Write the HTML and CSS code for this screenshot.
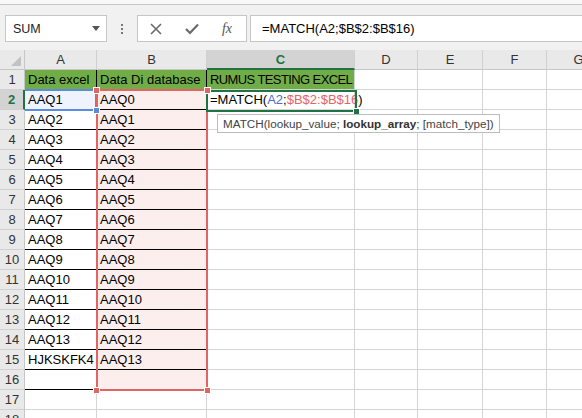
FILE: index.html
```html
<!DOCTYPE html>
<html>
<head>
<meta charset="utf-8">
<link rel="stylesheet" href="styles.css">
</head>
<body>
<div class="app">
  <div class="titlebar"></div>
  <div class="toolbar">
    <div class="namebox"><span class="nb-text">SUM</span><span class="nb-arrow"></span></div>
    <div class="dots"><span></span><span></span><span></span></div>
    <div class="fbuttons">
      <svg class="ic" width="14" height="14" viewBox="0 0 14 14"><path d="M2 2 L12 12 M12 2 L2 12" stroke="#6a6a6a" stroke-width="1.6" fill="none"/></svg>
      <svg class="ic" width="16" height="14" viewBox="0 0 16 14"><path d="M2 7 L6 11 L14 2.5" stroke="#6a6a6a" stroke-width="2.2" fill="none"/></svg>
      <span class="fx">fx</span>
    </div>
    <div class="finput">=MATCH(A2;$B$2:$B$16)</div>
  </div>
  <div class="sheet">
    <div class="corner"><span class="tri"></span></div>
    <div class="ch">A</div><div class="ch">B</div><div class="ch sel">C</div><div class="ch">D</div><div class="ch">E</div><div class="ch">F</div><div class="ch">G</div>

    <div class="rh">1</div><div class="c hd bkr">Data excel</div><div class="c hd bkr">Data Di database</div><div class="c hd tight">RUMUS TESTING EXCEL</div><div class="c"></div><div class="c"></div><div class="c"></div><div class="c"></div>

    <div class="rh sel">2</div><div class="c blue">AAQ1</div><div class="c red bk">AAQ0</div><div class="c formula">=MATCH(<span class="rb">A2</span>;<span class="rr">$B$2:$B$16</span>)</div><div class="c"></div><div class="c"></div><div class="c"></div><div class="c"></div>

    <div class="rh">3</div><div class="c bk">AAQ2</div><div class="c red bk">AAQ1</div><div class="c"></div><div class="c"></div><div class="c"></div><div class="c"></div><div class="c"></div>
    <div class="rh">4</div><div class="c bk">AAQ3</div><div class="c red bk">AAQ2</div><div class="c"></div><div class="c"></div><div class="c"></div><div class="c"></div><div class="c"></div>
    <div class="rh">5</div><div class="c bk">AAQ4</div><div class="c red bk">AAQ3</div><div class="c"></div><div class="c"></div><div class="c"></div><div class="c"></div><div class="c"></div>
    <div class="rh">6</div><div class="c bk">AAQ5</div><div class="c red bk">AAQ4</div><div class="c"></div><div class="c"></div><div class="c"></div><div class="c"></div><div class="c"></div>
    <div class="rh">7</div><div class="c bk">AAQ6</div><div class="c red bk">AAQ5</div><div class="c"></div><div class="c"></div><div class="c"></div><div class="c"></div><div class="c"></div>
    <div class="rh">8</div><div class="c bk">AAQ7</div><div class="c red bk">AAQ6</div><div class="c"></div><div class="c"></div><div class="c"></div><div class="c"></div><div class="c"></div>
    <div class="rh">9</div><div class="c bk">AAQ8</div><div class="c red bk">AAQ7</div><div class="c"></div><div class="c"></div><div class="c"></div><div class="c"></div><div class="c"></div>
    <div class="rh">10</div><div class="c bk">AAQ9</div><div class="c red bk">AAQ8</div><div class="c"></div><div class="c"></div><div class="c"></div><div class="c"></div><div class="c"></div>
    <div class="rh">11</div><div class="c bk">AAQ10</div><div class="c red bk">AAQ9</div><div class="c"></div><div class="c"></div><div class="c"></div><div class="c"></div><div class="c"></div>
    <div class="rh">12</div><div class="c bk">AAQ11</div><div class="c red bk">AAQ10</div><div class="c"></div><div class="c"></div><div class="c"></div><div class="c"></div><div class="c"></div>
    <div class="rh">13</div><div class="c bk">AAQ12</div><div class="c red bk">AAQ11</div><div class="c"></div><div class="c"></div><div class="c"></div><div class="c"></div><div class="c"></div>
    <div class="rh">14</div><div class="c bk">AAQ13</div><div class="c red bk">AAQ12</div><div class="c"></div><div class="c"></div><div class="c"></div><div class="c"></div><div class="c"></div>
    <div class="rh">15</div><div class="c bk">HJKSKFK4</div><div class="c red bk">AAQ13</div><div class="c"></div><div class="c"></div><div class="c"></div><div class="c"></div><div class="c"></div>
    <div class="rh">16</div><div class="c bk"></div><div class="c red"></div><div class="c"></div><div class="c"></div><div class="c"></div><div class="c"></div><div class="c"></div>
    <div class="rh">17</div><div class="c"></div><div class="c"></div><div class="c"></div><div class="c"></div><div class="c"></div><div class="c"></div><div class="c"></div>
    <div class="rh">18</div><div class="c"></div><div class="c"></div><div class="c"></div><div class="c"></div><div class="c"></div><div class="c"></div><div class="c"></div>

    <div class="range-blue"></div>
    <div class="range-red"></div>
    <div class="active"></div>
    <span class="h h-red h1"></span>
    <span class="h h-red h2"></span>
    <span class="h h-red h3"></span>
    <span class="h h-red h4"></span>
    <span class="h h-blue h5"></span>
    <span class="h h-green h6"></span>
    <div class="tip">MATCH(lookup_value; <b>lookup_array</b>; [match_type])</div>
  </div>
</div>
</body>
</html>
```
FILE: styles.css
```css
* { box-sizing: border-box; }
html, body { margin: 0; padding: 0; }
body {
  width: 582px;
  height: 418px;
  overflow: hidden;
  background: #ffffff;
  font-family: "Liberation Sans", Arial, sans-serif;
}
.app { width: 582px; height: 418px; overflow: hidden; }
.titlebar {
  height: 5px;
  background: #f8f8f8;
  border-bottom: 1px solid #c8c8c8;
}
.toolbar {
  height: 45px;
  background: #f1f1f1;
  display: flex;
  align-items: flex-start;
  padding-top: 10px;
  padding-left: 5px;
}
.namebox {
  width: 102px;
  height: 27px;
  background: #fff;
  border: 1px solid #c6c6c6;
  display: flex;
  align-items: center;
  justify-content: space-between;
  padding: 0 6px 0 7px;
  font-size: 12.5px;
  color: #222;
}
.nb-arrow {
  width: 0; height: 0;
  border-left: 4px solid transparent;
  border-right: 4px solid transparent;
  border-top: 5px solid #555;
}
.dots {
  width: 30px;
  height: 27px;
  display: flex;
  flex-direction: column;
  align-items: center;
  justify-content: center;
  gap: 2px;
}
.dots span { width: 2px; height: 2px; background: #777; }
.fbuttons {
  width: 110px;
  height: 27px;
  background: #fff;
  border: 1px solid #c6c6c6;
  display: flex;
  align-items: center;
  justify-content: space-between;
  padding: 0 14px 0 11px;
}
.ic { display: block; }
.fx {
  font-family: "Liberation Serif", serif;
  font-style: italic;
  font-size: 14px;
  color: #555;
}
.finput {
  flex: 1;
  height: 27px;
  margin-left: 3px;
  background: #fff;
  border: 1px solid #c6c6c6;
  border-right: none;
  padding-left: 11px;
  font-size: 13px;
  line-height: 25px;
  color: #000;
}
.sheet {
  position: relative;
  display: grid;
  grid-template-columns: 25px 72px 110px 148px 63px 65px 64px 64px;
  grid-auto-rows: 20px;
  font-size: 13px;
}
.corner {
  background: #e9e9e9;
  border-right: 1px solid #c6c6c6;
  border-bottom: 1px solid #c6c6c6;
  position: relative;
}
.tri {
  position: absolute;
  right: 3px; bottom: 3px;
  width: 0; height: 0;
  border-left: 10px solid transparent;
  border-bottom: 10px solid #c2c2c2;
}
.ch {
  background: #e9e9e9;
  border-right: 1px solid #d0d0d0;
  border-bottom: 1px solid #c6c6c6;
  text-align: center;
  line-height: 19px;
  color: #333;
}
.ch.sel {
  background: #d3d3d3;
  color: #217346;
  font-weight: bold;
  border-bottom: 2px solid #217346;
}
.rh {
  background: #e9e9e9;
  border-right: 1px solid #c6c6c6;
  border-bottom: 1px solid #d0d0d0;
  text-align: center;
  line-height: 19px;
  color: #333;
}
.rh.sel {
  background: #d3d3d3;
  color: #217346;
  font-weight: bold;
  border-right: 2px solid #217346;
}
.c {
  border-right: 1px solid #d4d4d4;
  border-bottom: 1px solid #d4d4d4;
  padding: 0 3px;
  line-height: 20px;
  white-space: nowrap;
  color: #000;
}
.hd { background: #70ad47; }
.tight { letter-spacing: -0.6px; }
.bkr { border-right-color: #000; }
.bk { border-bottom-color: #000; }
.blue { background: #eef3fd; }
.red { background: #fdeeee; }
.formula { overflow: visible; position: relative; z-index: 2; }
.rb { color: #4472c4; }
.rr { color: #e46464; }
.range-blue {
  position: absolute;
  left: 25px; top: 39px;
  width: 72px; height: 22px;
  border: 2px solid #5b8be0;
  border-left: none;
}
.range-red {
  position: absolute;
  left: 96px; top: 39px;
  width: 112px; height: 302px;
  border: 2px solid #e46464;
}
.active {
  position: absolute;
  left: 206px; top: 40px;
  width: 151px; height: 22px;
  border: 2px solid #217346;
  z-index: 3;
}
.h {
  position: absolute;
  width: 7px; height: 7px;
  border: 1px solid #fff;
  z-index: 4;
}
.h-red { background: #e46464; }
.h-blue { background: #5b8be0; }
.h-green { background: #217346; }
.h1 { left: 93px; top: 37px; }
.h2 { left: 204px; top: 37px; }
.h3 { left: 93px; top: 337px; }
.h4 { left: 204px; top: 337px; }
.h5 { left: 93px; top: 57px; }
.h6 { left: 353px; top: 58px; }
.tip {
  position: absolute;
  left: 217px; top: 64px;
  height: 19px;
  padding: 0 5px;
  background: #fff;
  border: 1px solid #bcbcbc;
  font-size: 11.7px;
  line-height: 17px;
  color: #444;
  white-space: nowrap;
  z-index: 5;
}
.tip b { color: #333; }
```
